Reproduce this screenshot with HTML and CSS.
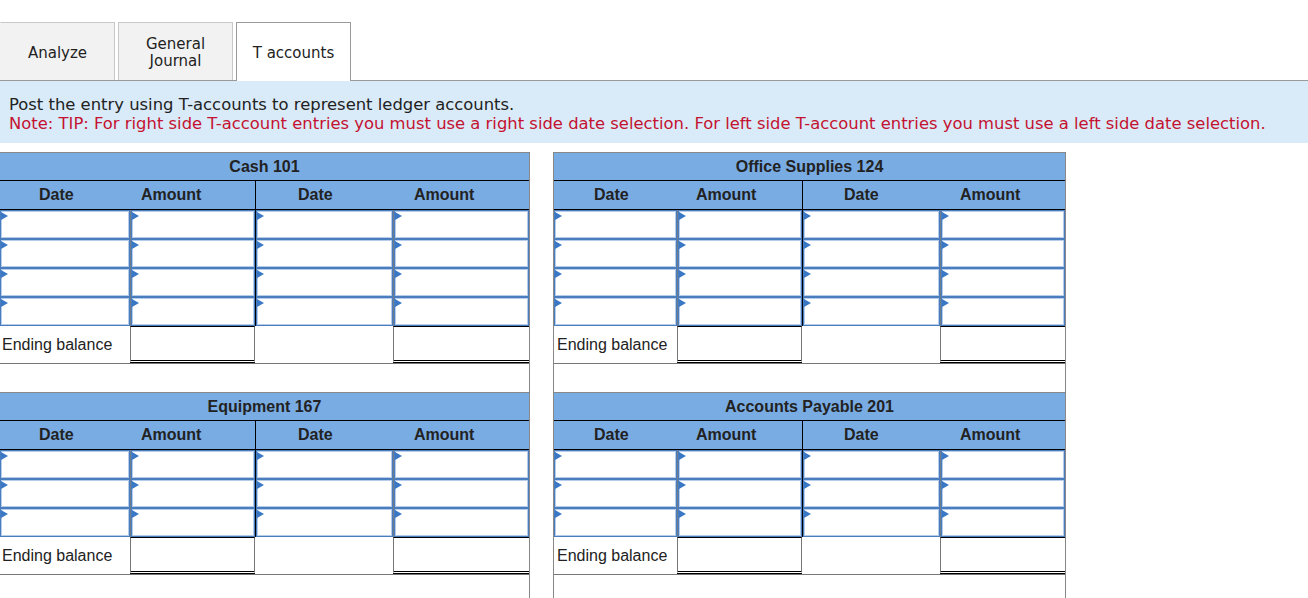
FILE: index.html
```html
<!DOCTYPE html>
<html>
<head>
<meta charset="utf-8">
<link rel="stylesheet" href="styles.css">
</head>
<body>
<div class="tabs">
  <div class="tab">Analyze</div>
  <div class="tab">General<br>Journal</div>
  <div class="tab active">T accounts</div>
</div>
<div class="instr">
  <div>Post the entry using T-accounts to represent ledger accounts.</div>
  <div class="note">Note: TIP: For right side T-account entries you must use a right side date selection. For left side T-account entries you must use a left side date selection.</div>
</div>
<div class="accounts">
  <div class="col left">
    <div class="acct">
      <div class="title">Cash 101</div>
      <div class="ch h1">Date</div><div class="ch h2">Amount</div><div class="ch h3">Date</div><div class="ch h4">Amount</div>
      <div class="in c1"><div class="box"></div></div><div class="in c2"><div class="box"></div></div><div class="in c3"><div class="box"></div></div><div class="in c4"><div class="box"></div></div>
      <div class="in c1"><div class="box"></div></div><div class="in c2"><div class="box"></div></div><div class="in c3"><div class="box"></div></div><div class="in c4"><div class="box"></div></div>
      <div class="in c1"><div class="box"></div></div><div class="in c2"><div class="box"></div></div><div class="in c3"><div class="box"></div></div><div class="in c4"><div class="box"></div></div>
      <div class="in c1"><div class="box"></div></div><div class="in c2"><div class="box"></div></div><div class="in c3"><div class="box"></div></div><div class="in c4"><div class="box"></div></div>
      <div class="eb lbl">Ending balance</div><div class="eb"><div class="ebox"></div></div><div class="eb"></div><div class="eb"><div class="ebox last"></div></div>
      <div class="spacer"></div>
    </div>
    <div class="acct">
      <div class="title">Equipment 167</div>
      <div class="ch h1">Date</div><div class="ch h2">Amount</div><div class="ch h3">Date</div><div class="ch h4">Amount</div>
      <div class="in c1"><div class="box"></div></div><div class="in c2"><div class="box"></div></div><div class="in c3"><div class="box"></div></div><div class="in c4"><div class="box"></div></div>
      <div class="in c1"><div class="box"></div></div><div class="in c2"><div class="box"></div></div><div class="in c3"><div class="box"></div></div><div class="in c4"><div class="box"></div></div>
      <div class="in c1"><div class="box"></div></div><div class="in c2"><div class="box"></div></div><div class="in c3"><div class="box"></div></div><div class="in c4"><div class="box"></div></div>
      <div class="eb lbl">Ending balance</div><div class="eb"><div class="ebox"></div></div><div class="eb"></div><div class="eb"><div class="ebox last"></div></div>
      <div class="spacer"></div>
    </div>
  </div>
  <div class="col right">
    <div class="acct">
      <div class="title">Office Supplies 124</div>
      <div class="ch h1">Date</div><div class="ch h2">Amount</div><div class="ch h3">Date</div><div class="ch h4">Amount</div>
      <div class="in c1"><div class="box"></div></div><div class="in c2"><div class="box"></div></div><div class="in c3"><div class="box"></div></div><div class="in c4"><div class="box"></div></div>
      <div class="in c1"><div class="box"></div></div><div class="in c2"><div class="box"></div></div><div class="in c3"><div class="box"></div></div><div class="in c4"><div class="box"></div></div>
      <div class="in c1"><div class="box"></div></div><div class="in c2"><div class="box"></div></div><div class="in c3"><div class="box"></div></div><div class="in c4"><div class="box"></div></div>
      <div class="in c1"><div class="box"></div></div><div class="in c2"><div class="box"></div></div><div class="in c3"><div class="box"></div></div><div class="in c4"><div class="box"></div></div>
      <div class="eb lbl">Ending balance</div><div class="eb"><div class="ebox"></div></div><div class="eb"></div><div class="eb"><div class="ebox last"></div></div>
      <div class="spacer"></div>
    </div>
    <div class="acct">
      <div class="title">Accounts Payable 201</div>
      <div class="ch h1">Date</div><div class="ch h2">Amount</div><div class="ch h3">Date</div><div class="ch h4">Amount</div>
      <div class="in c1"><div class="box"></div></div><div class="in c2"><div class="box"></div></div><div class="in c3"><div class="box"></div></div><div class="in c4"><div class="box"></div></div>
      <div class="in c1"><div class="box"></div></div><div class="in c2"><div class="box"></div></div><div class="in c3"><div class="box"></div></div><div class="in c4"><div class="box"></div></div>
      <div class="in c1"><div class="box"></div></div><div class="in c2"><div class="box"></div></div><div class="in c3"><div class="box"></div></div><div class="in c4"><div class="box"></div></div>
      <div class="eb lbl">Ending balance</div><div class="eb"><div class="ebox"></div></div><div class="eb"></div><div class="eb"><div class="ebox last"></div></div>
      <div class="spacer"></div>
    </div>
  </div>
</div>
</body>
</html>
```

FILE: styles.css
```css
html, body {
  margin: 0;
  padding: 0;
  background: #fff;
}

body {
  font-family: "DejaVu Sans", Verdana, sans-serif;
  color: #222;
}

.tabs {
  display: flex;
  gap: 3px;
  margin-top: 22px;
  border-bottom: 1px solid #9a9a9a;
  height: 58px;
}

.tab {
  box-sizing: border-box;
  width: 115px;
  height: 58px;
  padding-top: 3px;
  border: 1px solid #c8c8c8;
  border-bottom: none;
  background: #f2f2f2;
  display: flex;
  align-items: center;
  justify-content: center;
  text-align: center;
  font-size: 15px;
  line-height: 17px;
  color: #222;
}

.tab:first-child {
  border-left-color: transparent;
}

.tab.active {
  background: #fff;
  border-color: #9a9a9a;
  height: 59px;
}

.instr {
  background: #d9ebf9;
  padding: 14px 9px 10px;
  font-size: 16.4px;
  line-height: 19px;
  color: #222;
  white-space: nowrap;
}

.note {
  color: #c41230;
}

.accounts {
  display: grid;
  grid-template-columns: 530px 513px;
  column-gap: 23px;
  margin-top: 9px;
  font-family: "Liberation Sans", Arial, sans-serif;
  font-size: 16px;
  color: #222;
}

.col {
  box-sizing: border-box;
  border-right: 1px solid #888;
}

.col.right {
  border-left: 1px solid #888;
}

.acct {
  display: grid;
}

.left .acct {
  grid-template-columns: 130px 125px 138px 136px;
}

.right .acct {
  grid-template-columns: 123px 125px 138px 125px;
}

.title {
  grid-column: 1 / -1;
  box-sizing: border-box;
  height: 28px;
  border-top: 1px solid #888;
  background: #79ace3;
  font-weight: bold;
  text-align: center;
  line-height: 28px;
}

.ch {
  box-sizing: border-box;
  height: 30px;
  border-top: 1px solid #000;
  border-bottom: 1px solid #000;
  background: #79ace3;
  font-weight: bold;
  line-height: 28px;
  white-space: nowrap;
}

.ch.h3 {
  border-left: 1px solid #000;
}

.left .h1 { padding-left: 39px; }
.left .h2 { padding-left: 11px; }
.left .h3 { padding-left: 42px; }
.left .h4 { padding-left: 21px; }
.right .h1 { padding-left: 40px; }
.right .h2 { padding-left: 19px; }
.right .h3 { padding-left: 41px; }
.right .h4 { padding-left: 20px; }

.in {
  box-sizing: border-box;
  height: 29px;
  padding: 1px;
  background: #4a7dbd;
}

.in.c2, .in.c4 {
  border-left: 1px solid #6f7c8c;
}

.in.c3 {
  border-left: 1px solid #000;
}

.box {
  position: relative;
  box-sizing: border-box;
  height: 100%;
  border: 1px solid #b5cdea;
  background: #fff;
}

.box::before {
  content: "";
  position: absolute;
  left: -1px;
  top: 0;
  width: 0;
  height: 0;
  border-left: 7px solid #3a78c6;
  border-top: 4px solid transparent;
  border-bottom: 4px solid transparent;
}

.eb {
  box-sizing: border-box;
  height: 38px;
  border-bottom: 1px solid #777;
}

.eb.lbl {
  padding-left: 2px;
  line-height: 37px;
  white-space: nowrap;
}

.right .eb.lbl {
  padding-left: 3px;
}

.ebox {
  box-sizing: border-box;
  height: 100%;
  border-top: 1px solid #000;
  border-left: 1px solid #777;
  border-right: 1px solid #777;
  border-bottom: 3px double #000;
}

.ebox.last {
  border-right: none;
}

.spacer {
  grid-column: 1 / -1;
  height: 28px;
}
```
